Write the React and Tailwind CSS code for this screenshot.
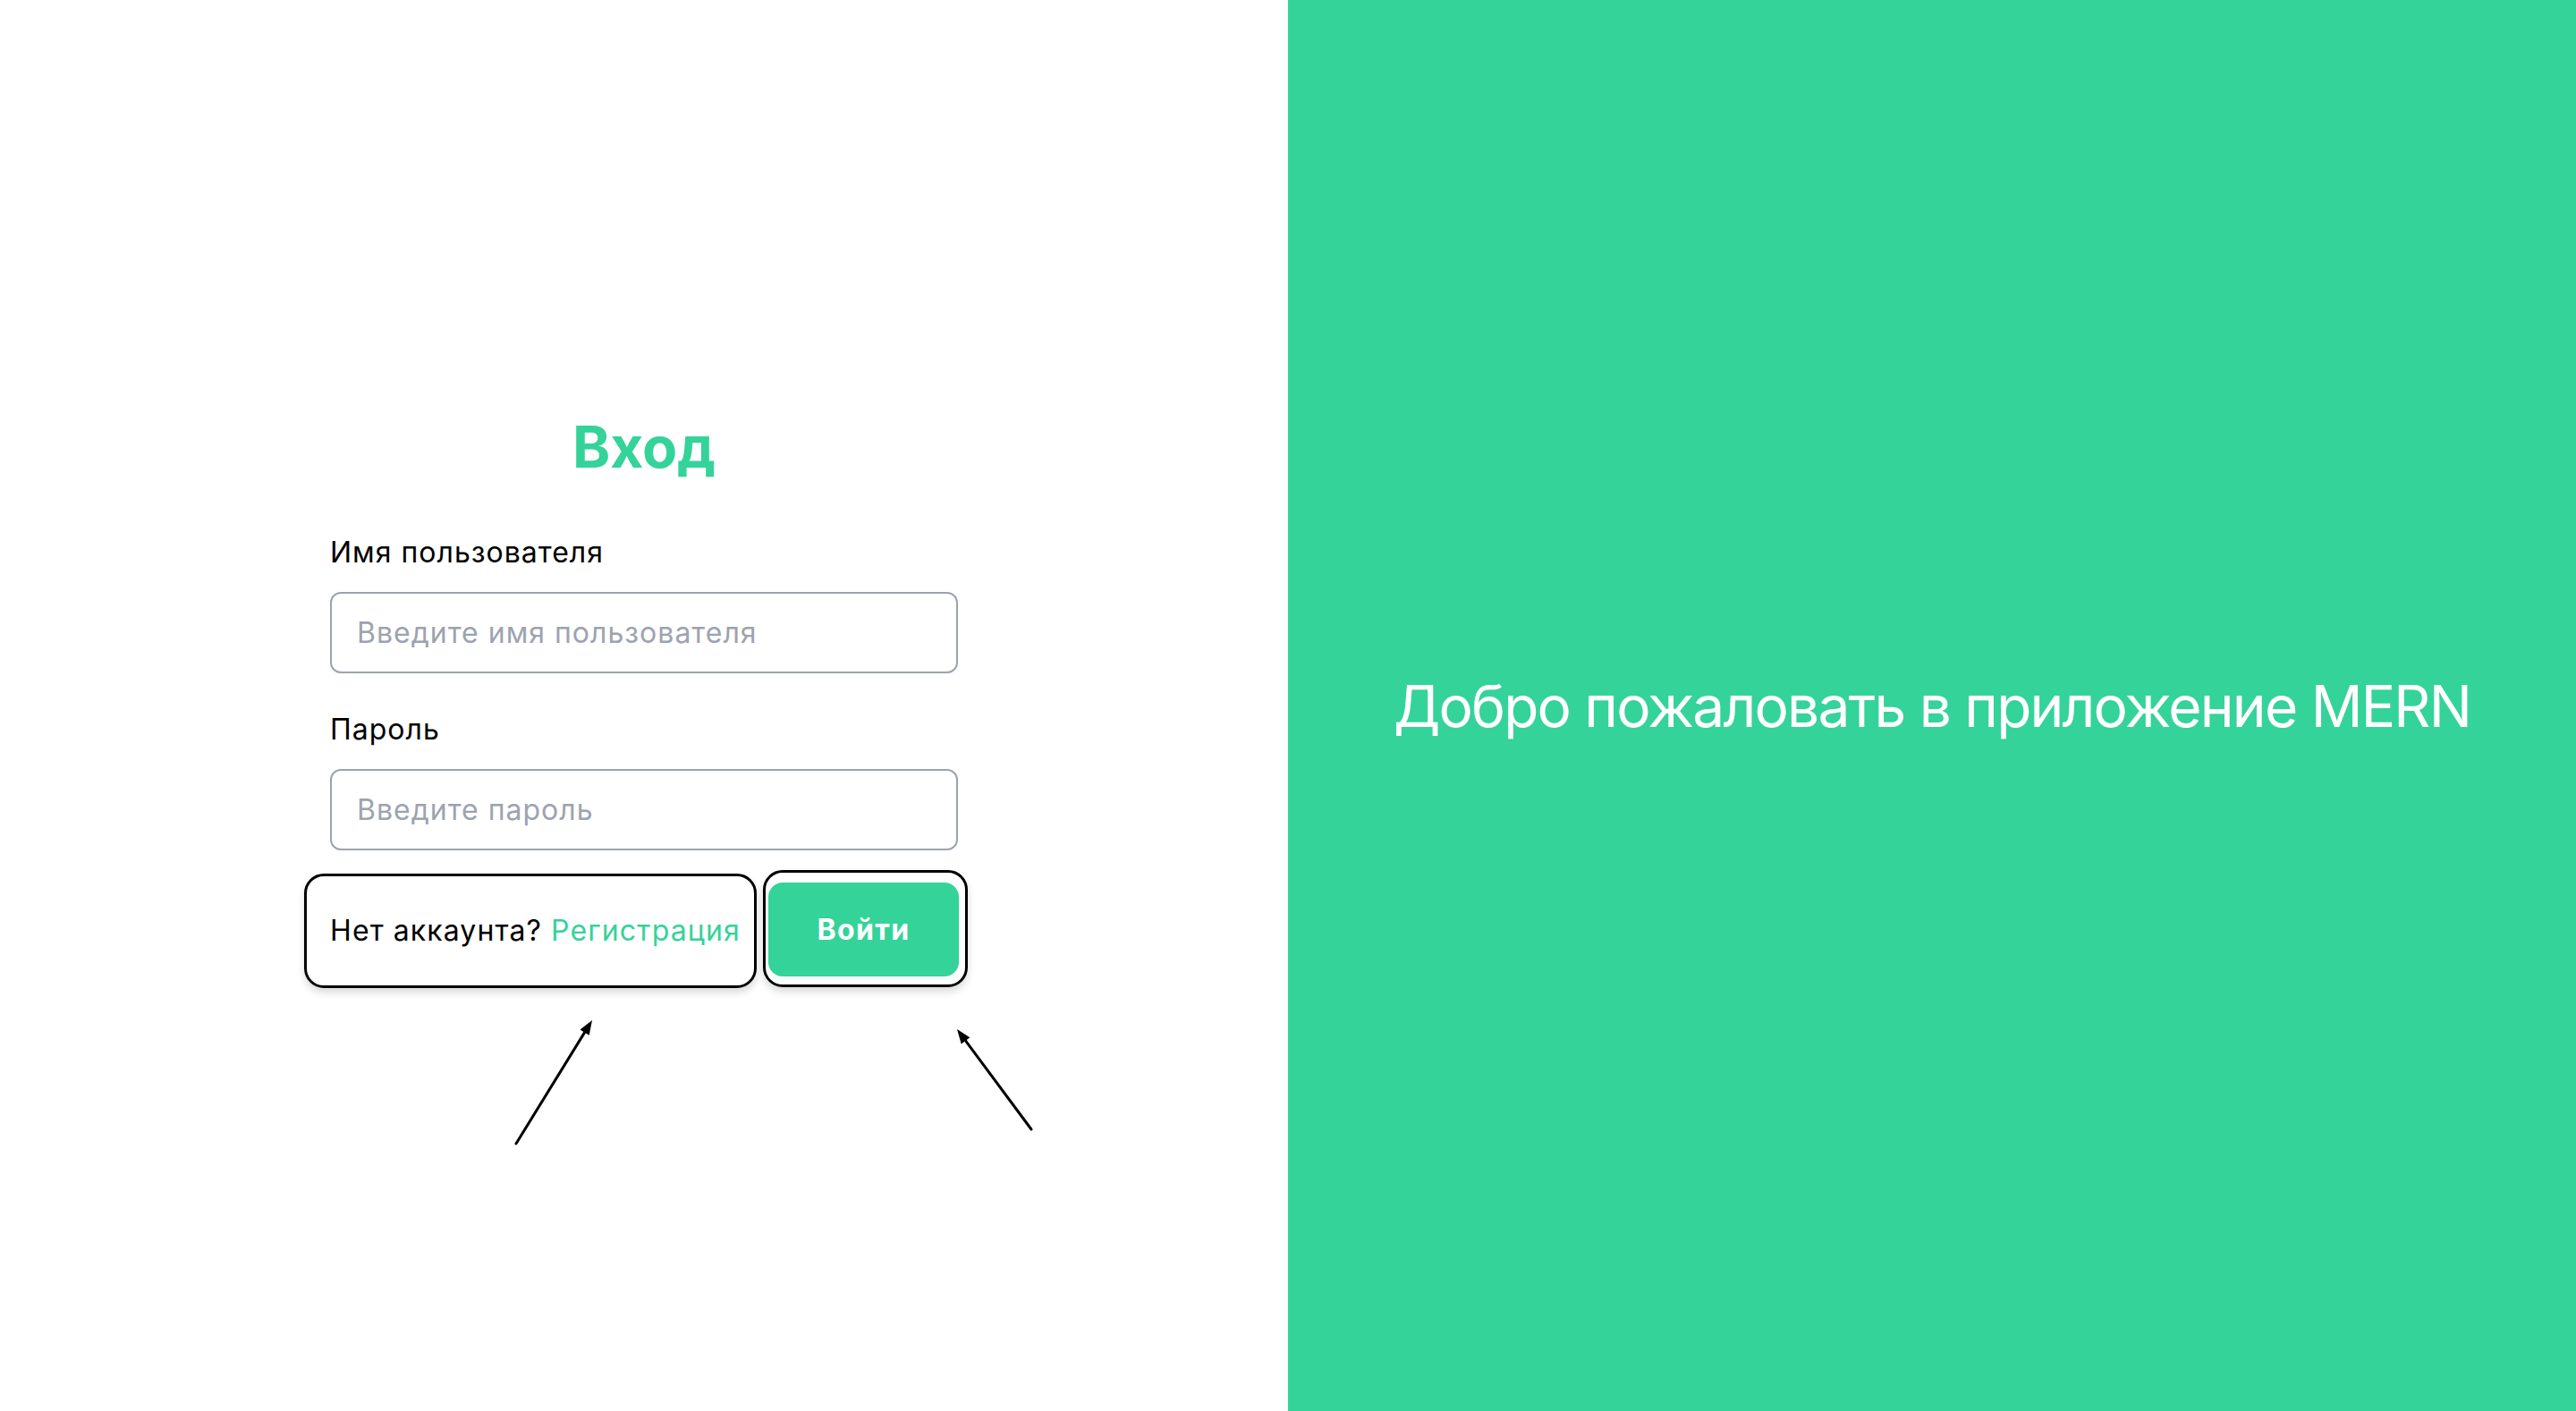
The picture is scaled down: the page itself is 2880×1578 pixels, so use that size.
import React from "react";

export default function App() {
  return (
    <div className="flex w-full h-[1578px] [font-family:Inter,'Noto_Sans',sans-serif] overflow-hidden">
      <div className="relative w-1/2 h-full bg-white flex flex-col items-center pt-[461px]">
        <div className="w-[702px] flex flex-col">
          <h1 className="text-center text-[64px] leading-[77px] font-bold text-[#34d399] mb-[56px]">
            Вход
          </h1>
          <label className="text-[32px] leading-[48px] tracking-[1px] text-black mb-[20px]">
            Имя пользователя
          </label>
          <input
            type="text"
            placeholder="Введите имя пользователя"
            className="h-[91px] w-full rounded-[12px] border-2 border-[#9ca3af] pl-[28px] pr-[28px] text-[32px] tracking-[1px] text-black placeholder:text-[#9ca3af] outline-none"
          />
          <label className="mt-[39px] text-[32px] leading-[48px] tracking-[1px] text-black mb-[20px]">
            Пароль
          </label>
          <input
            type="password"
            placeholder="Введите пароль"
            className="h-[91px] w-full rounded-[12px] border-2 border-[#9ca3af] pl-[28px] pr-[28px] text-[32px] tracking-[1px] text-black placeholder:text-[#9ca3af] outline-none"
          />
          <div className="mt-[22px] -ml-[29px] flex items-start gap-[7px]">
            <div className="shrink-0 mt-[4px] w-[506px] h-[128px] rounded-[22px] border-[3px] border-black shadow-[0_5px_8px_rgba(0,0,0,0.15)] flex items-center pl-[26px]">
              <p className="text-[32px] leading-[48px] tracking-[1.1px] text-black whitespace-nowrap">
                Нет аккаунта? <span className="text-[#34d399]">Регистрация</span>
              </p>
            </div>
            <div className="shrink-0 w-[229px] h-[131px] rounded-[22px] border-[3px] border-black shadow-[0_5px_8px_rgba(0,0,0,0.15)] pl-[3px] pt-[11px]">
              <button className="w-[213px] h-[105px] rounded-[16px] bg-[#34d399] text-white text-[32px] leading-[48px] tracking-[1.4px] font-bold flex items-center justify-center">
                Войти
              </button>
            </div>
          </div>
        </div>
        <svg
          className="absolute left-0 top-0 pointer-events-none"
          width="1440"
          height="1578"
          viewBox="0 0 1440 1578"
        >
          <line x1="577" y1="1279" x2="653.6" y2="1154.6" stroke="black" strokeWidth="3" strokeLinecap="round" />
          <polygon points="662,1141 658.7,1157.7 648.5,1151.5" fill="black" />
          <line x1="1153" y1="1263" x2="1079.5" y2="1163.8" stroke="black" strokeWidth="3" strokeLinecap="round" />
          <polygon points="1070,1151 1084.3,1160.2 1074.7,1167.4" fill="black" />
        </svg>
      </div>
      <div className="w-1/2 h-full bg-[#34d399] flex items-center justify-center">
        <h2 className="text-[64px] leading-[77px] tracking-[-1.8px] font-normal text-white whitespace-nowrap">
          Добро пожаловать в приложение MERN
        </h2>
      </div>
    </div>
  );
}
